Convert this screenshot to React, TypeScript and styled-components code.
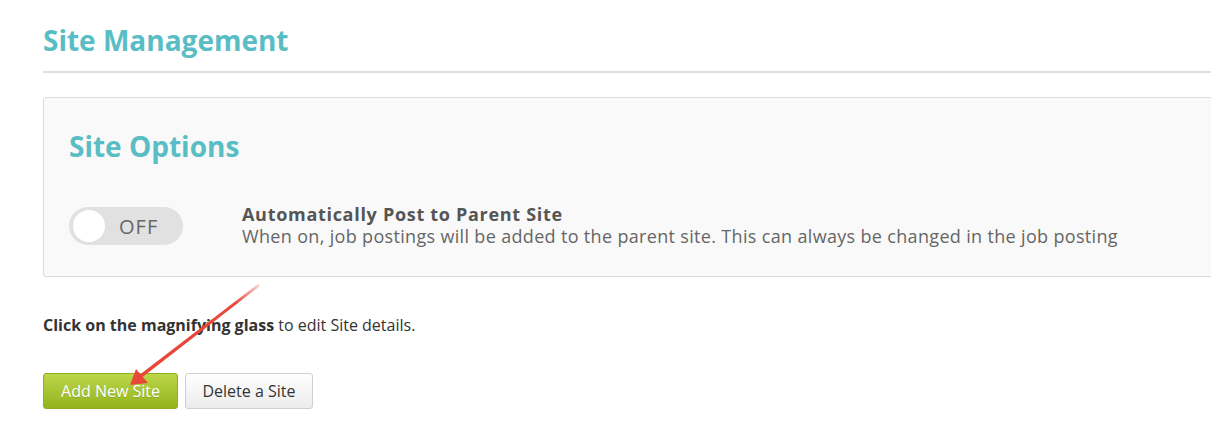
import React from 'react'
import styled, { createGlobalStyle } from 'styled-components'

const GlobalStyle = createGlobalStyle`
  html, body {
    margin: 0;
    padding: 0;
    background: #fff;
    overflow: hidden;
  }
  body {
    font-family: 'Open Sans', Arial, sans-serif;
    color: #333;
  }
`

export default function App() {
  return (
    <>
      <GlobalStyle />
      <Page>
        <PageTitle>Site Management</PageTitle>
        <Divider />
        <OptionsCard>
          <CardTitle>Site Options</CardTitle>
          <OptionRow>
            <Toggle>
              <Knob />
              <ToggleLabel>OFF</ToggleLabel>
            </Toggle>
            <OptionText>
              <OptionName>Automatically Post to Parent Site</OptionName>
              <OptionDesc>
                When on, job postings will be added to the parent site. This can always be changed in the job posting
              </OptionDesc>
            </OptionText>
          </OptionRow>
        </OptionsCard>
        <Hint>
          <strong>Click on the magnifying glass</strong> to edit Site details.
        </Hint>
        <Actions>
          <PrimaryButton>Add New Site</PrimaryButton>
          <SecondaryButton>Delete a Site</SecondaryButton>
        </Actions>
      </Page>
      <Arrow width="140" height="110" viewBox="0 0 140 110">
        <defs>
          <linearGradient id="fade" x1="1" y1="0" x2="0" y2="1">
            <stop offset="0" stopColor="#e8483a" stopOpacity="0.2" />
            <stop offset="0.2" stopColor="#e8483a" stopOpacity="1" />
            <stop offset="1" stopColor="#e8483a" stopOpacity="1" />
          </linearGradient>
        </defs>
        <path d="M132 1 L134 3 L14 96 L12 93 Z" fill="url(#fade)" />
        <path d="M4 102 L10 86 L22 100 Z" fill="#e8483a" />
        <path d="M12 92 L17 96 L7 100 Z" fill="#e8483a" />
      </Arrow>
    </>
  )
}

const Page = styled.div`
  width: 1200px;
  padding: 22px 0 30px 43px;
`
const PageTitle = styled.h1`
  margin: 0;
  font-size: 28px;
  font-weight: 700;
  color: #58bdc4;
  line-height: 36px;
`
const Divider = styled.div`
  height: 2px;
  background: #dedede;
  margin-top: 13px;
`
const OptionsCard = styled.div`
  margin-top: 24px;
  background: #f9f9f9;
  border: 1px solid #dcdcdc;
  border-radius: 3px;
  padding: 30px 25px 28px;
  height: 180px;
  box-sizing: border-box;
`
const CardTitle = styled.h2`
  margin: 0;
  font-size: 28px;
  font-weight: 700;
  color: #58bdc4;
  line-height: 36px;
`
const OptionRow = styled.div`
  display: flex;
  align-items: center;
  gap: 59px;
  margin-top: 40px;
`
const Toggle = styled.div`
  width: 114px;
  height: 38px;
  border-radius: 19px;
  background: #e1e1e1;
  display: flex;
  align-items: center;
  padding: 0 4px;
  box-sizing: border-box;
  gap: 14px;
`
const Knob = styled.div`
  width: 32px;
  height: 32px;
  border-radius: 50%;
  background: #fff;
`
const ToggleLabel = styled.span`
  font-size: 20px;
  color: #666;
  letter-spacing: 1px;
`
const OptionText = styled.div`
  display: flex;
  flex-direction: column;
`
const OptionName = styled.div`
  font-size: 18px;
  font-weight: 700;
  color: #555;
  line-height: 20px;
  letter-spacing: 0.7px;
`
const OptionDesc = styled.div`
  font-size: 18px;
  color: #666;
  line-height: 24px;
  letter-spacing: 0.33px;
`
const Hint = styled.p`
  margin: 39px 0 0;
  font-size: 16px;
  color: #333;
  line-height: 18px;
  strong {
    font-weight: 700;
  }
`
const Actions = styled.div`
  display: flex;
  gap: 7px;
  margin-top: 39px;
`
const ButtonBase = styled.button`
  height: 36px;
  padding: 0 10px;
  border-radius: 3px;
  font-family: 'Open Sans', Arial, sans-serif;
  font-size: 16px;
  cursor: pointer;
`
const PrimaryButton = styled(ButtonBase)`
  width: 135px;
  color: #fff;
  border: 1px solid #8eae1c;
  background: linear-gradient(#bcd64a, #93b41d);
  text-shadow: 0 1px 0 rgba(0, 0, 0, 0.15);
`
const SecondaryButton = styled(ButtonBase)`
  width: 128px;
  color: #333;
  border: 1px solid #cfcfcf;
  background: linear-gradient(#ffffff, #ececec);
`
const Arrow = styled.svg`
  position: absolute;
  left: 126px;
  top: 283px;
  pointer-events: none;
`
